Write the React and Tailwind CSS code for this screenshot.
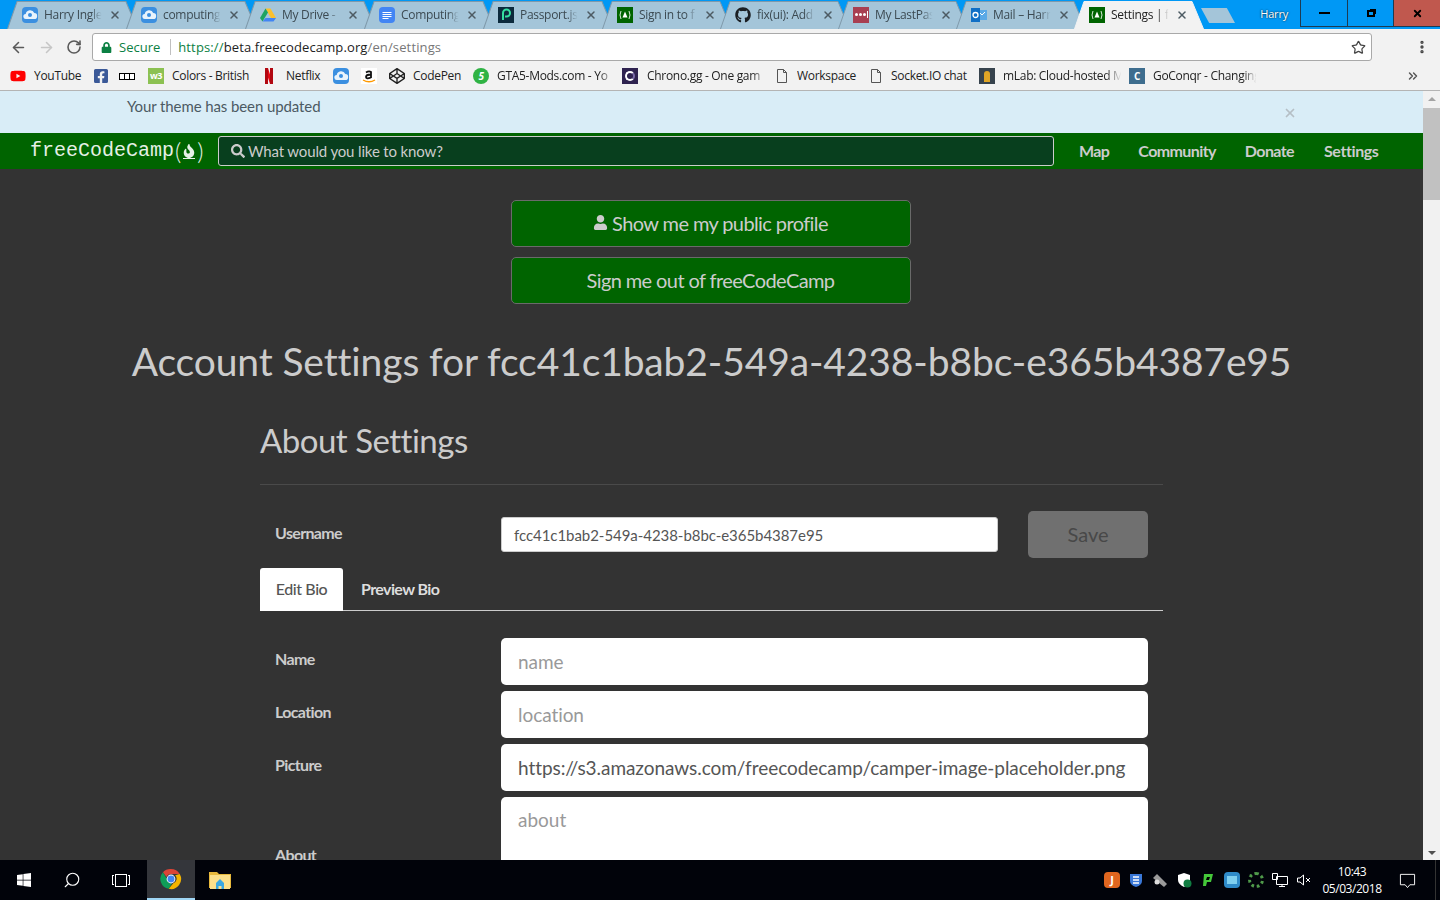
import { ArrowLeft, ArrowRight, RotateCw, Star, X, Search, MoreVertical, ChevronsRight } from "lucide-react";
import { FaGithub, FaUser, FaSearch, FaWindows, FaFire, FaLock, FaFacebookSquare, FaCodepen, FaYoutube } from "react-icons/fa";

const uiFont = "font-['Open_Sans','Noto_Sans',sans-serif]";

function Square({ className = "", children }) {
  return <span className={`w-4 h-4 shrink-0 flex items-center justify-center ${className}`}>{children}</span>;
}

function CloudIcon() {
  return (
    <Square className="bg-[#3b8fe0] rounded-sm">
      <svg viewBox="0 0 16 16" className="w-4 h-4">
        <path d="M4 12a2.5 2.5 0 0 1-.3-5A4.5 4.5 0 0 1 12.3 6 3 3 0 0 1 12 12z" fill="#e8f3fc" />
        <circle cx="8" cy="8" r="2" fill="#3b8fe0" />
      </svg>
    </Square>
  );
}

function FccIcon() {
  return (
    <Square className="bg-[#006400]">
      <svg viewBox="0 0 16 16" className="w-4 h-4" fill="none" stroke="#d9ead9" strokeWidth="1">
        <path d="M4 4Q2 8 4 12M12 4Q14 8 12 12" />
        <path d="M8 4.5L10.5 10.5H5.5Z" fill="#fff" stroke="none" />
      </svg>
    </Square>
  );
}

function DriveIcon() {
  return (
    <svg viewBox="0 0 16 16" className="w-4 h-4 shrink-0">
      <path d="M5.5 1.5h5L16 11h-5z" fill="#fbc02d" />
      <path d="M5.5 1.5L0 11l2.5 3.5L8 5.5z" fill="#1ea362" />
      <path d="M2.5 14.5h11L16 11H5.5z" fill="#4285f4" />
    </svg>
  );
}

function DocsIcon() {
  return (
    <Square className="bg-[#4285f4] rounded-sm">
      <svg viewBox="0 0 16 16" className="w-4 h-4" stroke="#fff" strokeWidth="1">
        <path d="M3.500 5.500h9M3.500 7.500h9M3.500 9.500h9M3.500 11.500h6" />
      </svg>
    </Square>
  );
}

function PassportIcon() {
  return (
    <Square className="bg-[#0c2a3d]">
      <svg viewBox="0 0 16 16" className="w-4 h-4" fill="none" strokeWidth="2">
        <path d="M5 13V6a3.500 3.500 0 1 1 3.500 3.500H7" stroke="#35dfa0" />
      </svg>
    </Square>
  );
}

function LastPassIcon() {
  return (
    <Square className="bg-[#a83f52] gap-[1px]">
      <span className="w-[3px] h-[3px] rounded-full bg-white" />
      <span className="w-[3px] h-[3px] rounded-full bg-white" />
      <span className="w-[3px] h-[3px] rounded-full bg-white" />
      <span className="w-[1px] h-[7px] bg-white" />
    </Square>
  );
}

function OutlookIcon() {
  return (
    <svg viewBox="0 0 16 16" className="w-4 h-4 shrink-0">
      <rect x="6" y="3" width="10" height="10" fill="#5aa9e6" />
      <path d="M9 6l2 2 3-3" stroke="#fff" fill="none" />
      <rect x="0" y="1" width="9" height="14" fill="#0f6fc6" />
      <circle cx="4.500" cy="8" r="2.500" fill="none" stroke="#fff" strokeWidth="1.300" />
    </svg>
  );
}

const tabs = [
  { title: "Harry Ingle", icon: <CloudIcon />, wide: true },
  { title: "computing", icon: <CloudIcon />, wide: true },
  { title: "My Drive -", icon: <DriveIcon />, wide: true },
  { title: "Computing", icon: <DocsIcon />, wide: true },
  { title: "Passport.js", icon: <PassportIcon />, wide: true },
  { title: "Sign in to f", icon: <FccIcon /> },
  { title: "fix(ui): Add", icon: <FaGithub className="w-4 h-4 shrink-0 text-[#1b1f23]" /> },
  { title: "My LastPas", icon: <LastPassIcon /> },
  { title: "Mail – Harr", icon: <OutlookIcon /> },
  { title: "Settings | f", icon: <FccIcon />, active: true },
];

function Tab({ title, icon, active, wide }) {
  return (
    <div className={`relative h-[29px] -mr-[12px] shrink-0 flex items-center pl-[15px] ${wide ? "w-[131px]" : "w-[130px]"}`}>
      <svg viewBox="0 0 130 29" preserveAspectRatio="none" className="absolute inset-0 w-full h-full">
        <path
          d="M0.500 29L10 1.500H118L129.500 29"
          fill={active ? "#f2f2f2" : "#a4c5d9"}
          stroke={active ? "#f2f2f2" : "#7f99aa"}
        />
      </svg>
      <span className="relative flex items-center">
        {icon}
        <span className={`ml-[6px] w-[60px] overflow-hidden whitespace-nowrap text-[12px] tracking-[-0.3px] [mask-image:linear-gradient(to_right,black_78%,transparent_96%)] ${active ? "text-[#222]" : "text-[#3c4a52]"}`}>
          {title}
        </span>
        <X className="ml-[5px] w-[12px] h-[12px] text-[#4d5b63]" strokeWidth={3} />
      </span>
    </div>
  );
}

function TabStrip() {
  return (
    <div className="h-[29px] bg-[#0098f5] flex items-stretch pl-[7px] shrink-0">
      {tabs.map((t) => <Tab key={t.title} {...t} />)}
      <div className="w-[34px] ml-[9px] mt-[8px] h-[15px] bg-[#a4c5d9] [clip-path:polygon(0_0,76%_0,100%_100%,24%_100%)] shrink-0" />
      <div className="ml-auto flex items-start">
        <span className="text-white text-[11px] mr-[12px] mt-[8px] leading-none tracking-[-0.2px] [text-shadow:0_0_2px_#000]">Harry</span>
        <div className="w-[47px] h-[27px] border-l border-b border-[#1d3b52] flex items-center justify-center">
          <span className="w-[11px] h-[2px] bg-black" />
        </div>
        <div className="w-[46px] h-[27px] border-l border-b border-[#1d3b52] flex items-center justify-center">
          <span className="relative w-[8px] h-[7px] border-2 border-black shadow-[2px_-2px_0_-1px_#000]" />
        </div>
        <div className="w-[47px] h-[27px] border-l border-b border-[#1d3b52] bg-[#c0584e] flex items-center justify-center">
          <X className="w-[11px] h-[11px] text-black" strokeWidth={4} />
        </div>
      </div>
    </div>
  );
}

function AddressBar() {
  return (
    <div className="h-[36px] flex items-center pl-[10px] pr-[10px] shrink-0">
      <ArrowLeft className="w-[17px] h-[17px] text-[#5a5a5a]" strokeWidth={2.200} />
      <ArrowRight className="ml-[11px] w-[17px] h-[17px] text-[#c6c6c6]" strokeWidth={2.200} />
      <RotateCw className="ml-[11px] w-[16px] h-[16px] text-[#5a5a5a]" strokeWidth={2.400} />
      <div className="ml-[10px] w-[1280px] h-[28px] bg-white rounded-[3px] border border-[#a9a9a9] flex items-center pl-[8px] pr-[5px]">
        <FaLock className="w-[11px] h-[11px] text-[#0b8043]" />
        <span className="ml-[7px] pt-[2px] text-[13px] text-[#0b8043]">Secure</span>
        <span className="ml-[10px] w-[1px] h-[16px] bg-[#c0c0c0]" />
        <span className="ml-[7px] pt-[2px] text-[13px] text-[#0b8043] tracking-[0.13px]">
          https://<span className="text-[#222]">beta.freecodecamp.org</span><span className="text-[#777]">/en/settings</span>
        </span>
        <Star className="ml-auto w-[15px] h-[15px] text-[#444]" strokeWidth={2} />
      </div>
      <MoreVertical className="ml-auto w-[16px] h-[16px] text-[#444]" strokeWidth={3} />
    </div>
  );
}

function PageIcon() {
  return (
    <svg viewBox="0 0 16 16" className="w-4 h-4 shrink-0" fill="none" stroke="#555">
      <path d="M2.500 1.500h6l3 3v10h-9zM8.500 1.500v3h3" />
    </svg>
  );
}

const bookmarks = [
  { text: "YouTube", w: "ml-[8px] w-[59px]", icon: <FaYoutube className="w-4 h-4 shrink-0 text-[#f00]" /> },
  { text: "", w: "ml-[8px] w-[2px]", icon: <FaFacebookSquare className="w-4 h-4 shrink-0 text-[#3b5998]" /> },
  { text: "", w: "ml-[8px] w-[5px]", icon: (
    <span className="w-4 h-[7px] shrink-0 bg-black flex items-center justify-center gap-[1px]">
      <span className="w-[4px] h-[5px] bg-white" />
      <span className="w-[4px] h-[5px] bg-white" />
      <span className="w-[4px] h-[5px] bg-white" />
    </span>
  ) },
  { text: "Colors - British", w: "ml-[8px] w-[92px]", icon: <Square className="bg-[#8cc152] text-white text-[9px] font-bold">w3</Square> },
  { text: "Netflix", w: "ml-[6px] w-[47px]", icon: (
    <svg viewBox="0 0 16 16" className="w-4 h-4 shrink-0"><path d="M1 0h3l5 16H6z" fill="#e50914" /><path d="M1 0h3v16H1zM6 0h3v16H6z" fill="#b20710" /></svg>
  ) },
  { text: "", w: "ml-[8px] w-[4px]", icon: <CloudIcon /> },
  { text: "", w: "ml-[8px] w-[4px]", icon: (
    <svg viewBox="0 0 16 16" className="w-4 h-4 shrink-0">
      <rect width="16" height="16" fill="#fff" />
      <path d="M5 4.500Q8 2.500 10 4v6M10 6.500Q5 6.500 5 9t5 .500" fill="none" stroke="#111" strokeWidth="1.800" />
      <path d="M2 12q6 3.500 12 0" fill="none" stroke="#f90" strokeWidth="1.300" />
    </svg>
  ) },
  { text: "CodePen", w: "ml-[8px] w-[60px]", icon: <FaCodepen className="w-4 h-4 shrink-0 text-[#222]" /> },
  { text: "GTA5-Mods.com - Yo", w: "ml-[8px] w-[125px]", fade: true, icon: <span className="w-4 h-4 shrink-0 rounded-full bg-[#2fb344] text-white text-[10px] italic font-bold text-center leading-4">5</span> },
  { text: "Chrono.gg - One gam", w: "ml-[9px] w-[128px]", fade: true, icon: <Square className="bg-[#2f2350]"><span className="w-[10px] h-[10px] rounded-full border-2 border-white border-r-[#7a6aa8]" /></Square> },
  { text: "Workspace", w: "ml-[6px] w-[72px]", icon: <PageIcon /> },
  { text: "Socket.IO chat", w: "ml-[6px] w-[88px]", icon: <PageIcon /> },
  { text: "mLab: Cloud-hosted M", w: "ml-[8px] w-[126px]", fade: true, icon: <Square className="bg-[#37434d]"><span className="w-[6px] h-[11px] rounded-t-sm bg-[#e0a526]" /></Square> },
  { text: "GoConqr - Changing", w: "ml-[8px] w-[110px]", fade: true, icon: <Square className="bg-[#3e6d8e] text-white text-[10px] font-bold">C</Square> },
];

function BookmarksBar() {
  return (
    <div className="relative h-[26px] flex items-center pl-[10px] pb-[3px] border-b border-[#b4b4b4] shrink-0 text-[12px] text-[#222] tracking-[-0.3px]">
      {bookmarks.map((b, i) => (
        <div key={i} className="flex items-center shrink-0">
          {b.icon}
          <span className={`whitespace-nowrap overflow-hidden ${b.w} ${b.fade ? "[mask-image:linear-gradient(to_right,black_82%,transparent_94%)]" : ""}`}>
            {b.text}
          </span>
        </div>
      ))}
      <ChevronsRight className="absolute left-[1406px] w-[14px] h-[14px] text-[#555]" strokeWidth={2.500} />
    </div>
  );
}

function Navbar() {
  return (
    <div className="h-[36px] bg-[#006400] flex items-center pl-[30px] text-[#ccc] shrink-0">
      <div className="w-[188px] flex items-center text-[#e6f0e6] font-['Liberation_Mono',monospace] text-[20px] leading-none">
        freeCodeCamp
        <span className="flex items-center font-['Lato',sans-serif] font-light text-[24px] ml-[1px]">
          (<FaFire className="w-[12px] h-[15px] mx-[2px] border-b border-[#e6f0e6]" />)
        </span>
      </div>
      <div className="w-[836px] h-[30px] bg-[#083f1e] border border-[#ccc] rounded-[3px] flex items-center pl-[12px] text-[15px] tracking-[-0.15px]">
        <FaSearch className="w-[14px] h-[14px] mr-[3px]" />
        What would you like to know?
      </div>
      <div className="flex font-bold text-[16px] ml-[25px] gap-[29px] tracking-[-0.6px]">
        <span>Map</span>
        <span>Community</span>
        <span>Donate</span>
        <span className="ml-[1px] tracking-[-0.4px]">Settings</span>
      </div>
    </div>
  );
}

function GreenButton({ children }) {
  return (
    <button className="w-[400px] h-[47px] bg-[#006400] border border-[#6a6a6a] rounded-[5px] pb-[2px] text-[20px] text-[#ccc] flex items-center justify-center tracking-[-0.6px]">
      {children}
    </button>
  );
}

function Field({ label, placeholder, value }) {
  return (
    <div className="flex h-[47px] mb-[6px]">
      <label className="w-[241px] pl-[15px] pt-[9px] font-bold text-[16px] text-[#ccc] tracking-[-0.65px]">{label}</label>
      <div className="w-[647px] h-[47px] bg-white rounded-[5px] pl-[17px] pt-[2px] flex items-center text-[19px] tracking-[-0.06px] text-[#555] whitespace-nowrap">
        {value || <span className="text-[#999]">{placeholder}</span>}
      </div>
    </div>
  );
}

function Page() {
  return (
    <div className="flex-1 min-w-0 overflow-hidden bg-[#333] font-['Lato',sans-serif]">
      <div className="h-[42px] bg-[#d9edf7] relative text-[15px] tracking-[-0.1px] text-[#4c5a63] pl-[127px] pt-[4px]">
        Your theme has been updated
        <X className="absolute left-[1283px] top-[15px] w-[14px] h-[14px] text-[#b5bfc5]" strokeWidth={3} />
      </div>
      <Navbar />
      <div className="flex flex-col items-center gap-[10px] pt-[31px] pr-[2px]">
        <GreenButton><FaUser className="w-[15px] h-[15px] mr-[4px]" />Show me my public profile</GreenButton>
        <GreenButton>Sign me out of freeCodeCamp</GreenButton>
      </div>
      <h1 className="mt-[32px] text-center text-[39px] tracking-[-0.12px] leading-[50px] text-[#ccc] whitespace-nowrap">
        Account Settings for fcc41c1bab2-549a-4238-b8bc-e365b4387e95
      </h1>
      <div className="ml-[260px] w-[903px]">
        <h2 className="mt-[32px] text-[33px] tracking-[-0.5px] leading-[44px] text-[#ccc]">About Settings</h2>
        <div className="mt-[22px] h-[1px] bg-[#4a4a4a]" />
        <div className="flex mt-[26px] h-[47px]">
          <label className="w-[241px] pl-[15px] pt-[10px] font-bold text-[16px] text-[#ccc] tracking-[-0.65px]">Username</label>
          <div className="mt-[6px] w-[497px] h-[35px] bg-white rounded-[3px] border border-[#ccc] pl-[12px] pt-[2px] flex items-center text-[15px] tracking-[-0.05px] text-[#555]">
            fcc41c1bab2-549a-4238-b8bc-e365b4387e95
          </div>
          <div className="ml-[30px] w-[120px] h-[47px] bg-[#707070] rounded-[5px] pb-[2px] flex items-center justify-center text-[20px] text-[#484848]">Save</div>
        </div>
        <div className="flex mt-[10px] h-[43px] border-b border-[#ccc]">
          <div className="w-[83px] h-[43px] bg-white rounded-t-[3px] pb-[2px] flex items-center justify-center font-medium text-[16px] text-[#555] tracking-[-0.4px]">Edit Bio</div>
          <div className="ml-[18px] flex items-center font-bold text-[16px] text-[#ddd] tracking-[-0.6px]">Preview Bio</div>
        </div>
        <div className="mt-[27px]">
          <Field label="Name" placeholder="name" />
          <Field label="Location" placeholder="location" />
          <Field label="Picture" value="https://s3.amazonaws.com/freecodecamp/camper-image-placeholder.png" />
          <div className="flex">
            <label className="w-[241px] pl-[15px] pt-[46px] font-bold text-[16px] text-[#ccc] tracking-[-0.65px]">About</label>
            <div className="w-[647px] h-[120px] bg-white rounded-[5px] pl-[17px] pt-[9px] text-[19px] text-[#999]">about</div>
          </div>
        </div>
      </div>
    </div>
  );
}

function Scrollbar() {
  return (
    <div className="w-[17px] bg-[#f1f1f1] flex flex-col items-center shrink-0">
      <span className="mt-[6px] w-0 h-0 border-x-[4px] border-x-transparent border-b-[4px] border-b-[#a3a3a3]" />
      <div className="mt-[7px] w-full h-[92px] bg-[#c1c1c1]" />
      <span className="mt-auto mb-[5px] w-0 h-0 border-x-[4px] border-x-transparent border-t-[4px] border-t-[#505050]" />
    </div>
  );
}

function ChromeIcon() {
  return (
    <svg viewBox="0 0 24 24" className="w-[22px] h-[22px]">
      <path d="M12 1a11 11 0 0 1 9.500 5.500H12a5.500 5.500 0 0 0-5 3.200L3.200 4.500A11 11 0 0 1 12 1z" fill="#db4437" />
      <path d="M3.200 4.500L8 12.500a5 5 0 0 0 5 4.500L9.500 22.700A11 11 0 0 1 3.200 4.500z" fill="#0f9d58" />
      <path d="M21.500 6.500A11 11 0 0 1 9.500 22.700L14.500 16.500A5 5 0 0 0 16.500 8z" fill="#f4b400" />
      <circle cx="12" cy="12" r="4.800" fill="#fff" />
      <circle cx="12" cy="12" r="3.800" fill="#4285f4" />
    </svg>
  );
}

function FolderIcon() {
  return (
    <svg viewBox="0 0 22 20" className="w-[22px] h-[20px]">
      <path d="M0 2h8l2 2h12v14H0z" fill="#e7b93c" />
      <rect x="1" y="5" width="20" height="14" fill="#fbe08a" />
      <path d="M7 13l4-4 4 4v6h-2.500v-3h-3v3H7z" fill="#3aa8e0" />
    </svg>
  );
}

function TrayIcons() {
  return (
    <div className="flex items-center gap-[8px] ml-auto">
      <Square className="bg-[#e0661f] rounded-sm text-white text-[11px] font-bold">J</Square>
      <svg viewBox="0 0 16 16" className="w-4 h-4"><path d="M2 2h12v7q0 4-6 6-6-2-6-6z" fill="#3a78d8" /><path d="M5 5h6M5 8h6M5 11h6" stroke="#fff" strokeWidth="1.500" /></svg>
      <svg viewBox="0 0 16 16" className="w-4 h-4"><path d="M1 6l4-4 10 10-3 3z" fill="#9a9a9a" /><circle cx="5" cy="10" r="2.500" fill="#ddd" /></svg>
      <svg viewBox="0 0 16 16" className="w-4 h-4"><path d="M8 1l6 2v5q0 4-6 7-6-3-6-7V3z" fill="#fff" /><circle cx="11.500" cy="11.500" r="4" fill="#107c41" /></svg>
      <svg viewBox="0 0 16 16" className="w-4 h-4"><path d="M4 2h9l-2 8H7l-1 4H3z" fill="#45c83a" /><path d="M7 5h3l-1 3H6z" fill="#000" /></svg>
      <Square className="bg-[#2f8bc9] rounded-sm"><span className="w-[10px] h-[8px] bg-[#7fd0f0]" /></Square>
      <span className="w-4 h-4 rounded-full border-[3px] border-dotted border-[#4f9a4a]" />
      <svg viewBox="0 0 16 16" className="w-4 h-4" fill="none" stroke="#fff"><path d="M4.500 4.500h11v8h-11zM10 12.500v2M7 14.500h6M.5 1.500h5v6h-5z" /></svg>
      <svg viewBox="0 0 16 16" className="w-4 h-4" fill="none" stroke="#fff"><path d="M1.500 6h2.500l3.500-3v10L4 10H1.500zM10 6l4 4M14 6l-4 4" /></svg>
    </div>
  );
}

function Taskbar() {
  return (
    <div className={`h-[40px] bg-[#01030a] flex items-center shrink-0 text-white ${uiFont}`}>
      <div className="w-[48px] flex justify-center"><FaWindows className="w-[16px] h-[16px]" /></div>
      <div className="w-[48px] flex justify-center"><Search className="w-[18px] h-[18px] -scale-x-100" strokeWidth={1.500} /></div>
      <div className="w-[49px] flex justify-center items-center gap-[1px]">
        <span className="w-[2px] h-[10px] border border-r-0 border-white" />
        <span className="w-[12px] h-[13px] border border-white" />
        <span className="w-[2px] h-[10px] border border-l-0 border-white" />
      </div>
      <div className="ml-[2px] w-[48px] h-[40px] bg-[#34363b] border-b-2 border-[#9fd6f5] flex items-center justify-center"><ChromeIcon /></div>
      <div className="w-[49px] flex justify-center"><FolderIcon /></div>
      <TrayIcons />
      <div className="w-[70px] ml-[5px] text-center text-[12px] leading-[17px] tracking-[-0.45px]">
        <div>10:43</div>
        <div>05/03/2018</div>
      </div>
      <div className="w-[48px] flex justify-center pr-[8px]">
        <svg viewBox="0 0 18 18" className="w-[17px] h-[17px]" fill="none" stroke="#fff"><path d="M1.500 2.500h15v11h-5l-2.500 3-2.500-3h-5z" /></svg>
      </div>
      <span className="w-[1px] h-[40px] bg-[#333] mr-[4px]" />
    </div>
  );
}

export default function App() {
  return (
    <div className={`relative h-screen w-[1440px] overflow-hidden flex flex-col bg-[#f2f2f2] ${uiFont}`}>
      <TabStrip />
      <AddressBar />
      <BookmarksBar />
      <div className="flex flex-1 min-h-0">
        <Page />
        <Scrollbar />
      </div>
      <Taskbar />
    </div>
  );
}
